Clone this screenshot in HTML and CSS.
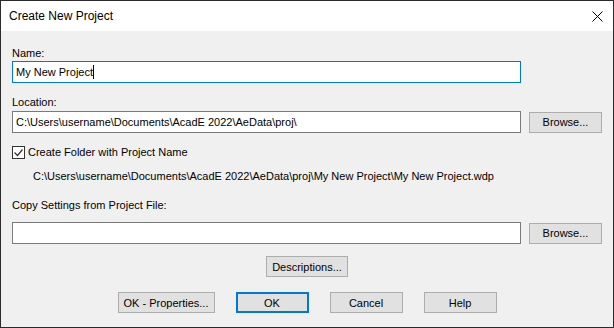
FILE: index.html
```html
<!DOCTYPE html>
<html lang="en">
<head>
  <meta charset="UTF-8">
  <title>Create New Project</title>
  <link rel="stylesheet" href="styles.css">
</head>
<body>
  <div class="window">
    <div class="titlebar">
      <span class="title">Create New Project</span>
      <svg class="close" width="11" height="11" viewBox="0 0 11 11">
        <path d="M0.5 0.5 L10.5 10.5 M10.5 0.5 L0.5 10.5" stroke="#000" stroke-width="1" fill="none"/>
      </svg>
    </div>

    <div class="content">
      <label class="label label-name">Name:</label>
      <div class="field-row">
        <div class="textbox focused">My New Project<span class="caret"></span></div>
      </div>

      <label class="label label-location">Location:</label>
      <div class="field-row">
        <div class="textbox">C:\Users\username\Documents\AcadE 2022\AeData\proj\</div>
        <button class="btn">Browse...</button>
      </div>

      <div class="check-row">
        <span class="checkbox">
          <svg width="11" height="11" viewBox="0 0 11 11">
            <path d="M1.5 5.5 L4.5 8.5 L9.5 2.5" stroke="#333" stroke-width="1.2" fill="none"/>
          </svg>
        </span>
        <span>Create Folder with Project Name</span>
      </div>

      <div class="path">C:\Users\username\Documents\AcadE 2022\AeData\proj\My New Project\My New Project.wdp</div>

      <label class="label label-copy">Copy Settings from Project File:</label>
      <div class="field-row">
        <div class="textbox"></div>
        <button class="btn">Browse...</button>
      </div>

      <div class="center-row">
        <button class="btn btn-desc">Descriptions...</button>
      </div>

      <div class="button-row">
        <button class="btn btn-wide">OK - Properties...</button>
        <button class="btn default">OK</button>
        <button class="btn">Cancel</button>
        <button class="btn">Help</button>
      </div>
    </div>
  </div>
</body>
</html>
```

FILE: styles.css
```css
body {
  margin: 0;
  font-family: "Liberation Sans", Arial, sans-serif;
  font-size: 11px;
  color: #000;
  background-color: #f0f0f0;
}

.window {
  width: 614px;
  height: 328px;
  box-sizing: border-box;
  border: 1px solid #2b2b2b;
  background-color: #f0f0f0;
  display: flex;
  flex-direction: column;
}

.titlebar {
  height: 30px;
  background-color: #fff;
  display: flex;
  align-items: center;
  justify-content: space-between;
  padding: 0 9px 0 8px;
  flex-shrink: 0;
}

.title {
  font-size: 12px;
  padding-bottom: 1px;
}

.close {
  margin-right: 1px;
}

.content {
  padding: 16px 11px 0 11px;
}

.label {
  display: block;
  line-height: 13px;
}

.label-name {
  margin-bottom: 1px;
}

.label-location {
  margin-top: 13px;
  margin-bottom: 2px;
}

.label-copy {
  margin-top: 16px;
  margin-bottom: 10px;
}

.field-row {
  display: grid;
  grid-template-columns: 509px 73px;
  gap: 8px;
  align-items: center;
}

.textbox {
  height: 22px;
  box-sizing: border-box;
  border: 1px solid #7a7a7a;
  background-color: #fff;
  padding: 0 3px;
  line-height: 20px;
  white-space: nowrap;
  overflow: hidden;
}

.textbox.focused {
  border-color: #0078d7;
}

.caret {
  display: inline-block;
  width: 1px;
  height: 14px;
  background-color: #000;
  vertical-align: -3px;
}

.btn {
  height: 21px;
  box-sizing: border-box;
  border: 1px solid #adadad;
  background-color: #e1e1e1;
  font-family: inherit;
  font-size: 11px;
  color: #000;
  padding: 0;
  width: 73px;
}

.btn.default {
  border: 2px solid #0078d7;
}

.check-row {
  display: flex;
  align-items: center;
  gap: 3px;
  margin-top: 13px;
  line-height: 13px;
}

.checkbox {
  width: 13px;
  height: 13px;
  box-sizing: border-box;
  border: 1px solid #333;
  background-color: #fff;
  display: flex;
}

.path {
  margin-top: 11px;
  padding-left: 21px;
  line-height: 13px;
}

.center-row {
  display: flex;
  justify-content: center;
  margin-top: 12px;
}

.btn-desc {
  width: 82px;
}

.button-row {
  display: flex;
  justify-content: center;
  gap: 21px;
  margin-top: 15px;
}

.btn-wide {
  width: 97px;
}
```
